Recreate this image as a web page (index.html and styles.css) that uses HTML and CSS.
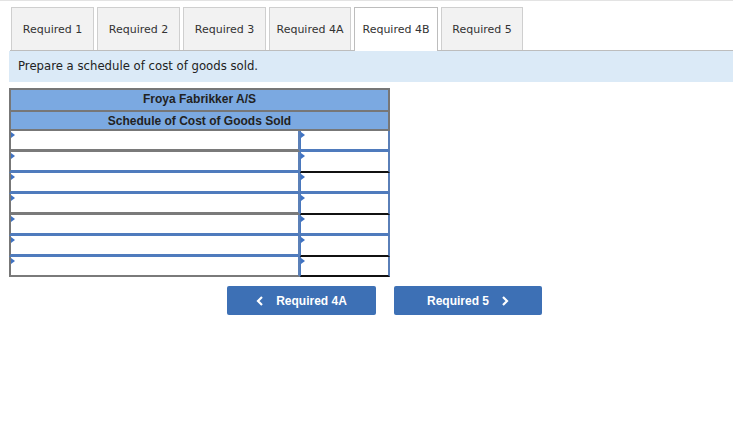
FILE: index.html
```html
<!DOCTYPE html>
<html>
<head>
<meta charset="utf-8">
<link rel="stylesheet" href="styles.css">
</head>
<body>
<div class="top-rule"></div>
<div class="tabs">
  <div class="tab">Required 1</div>
  <div class="tab">Required 2</div>
  <div class="tab">Required 3</div>
  <div class="tab">Required 4A</div>
  <div class="tab active">Required 4B</div>
  <div class="tab">Required 5</div>
</div>
<div class="instruction">Prepare a schedule of cost of goods sold.</div>
<div class="sheet">
  <div class="head h1">Froya Fabrikker A/S</div>
  <div class="head h2">Schedule of Cost of Goods Sold</div>
  <div class="row"><div class="cell left gray-b"></div><div class="cell right"></div></div>
  <div class="row"><div class="cell left"></div><div class="cell right dark-b"></div></div>
  <div class="row"><div class="cell left"></div><div class="cell right"></div></div>
  <div class="row"><div class="cell left gray-b"></div><div class="cell right dark-b"></div></div>
  <div class="row"><div class="cell left"></div><div class="cell right"></div></div>
  <div class="row"><div class="cell left"></div><div class="cell right dark-b"></div></div>
  <div class="row last"><div class="cell left"></div><div class="cell right dark-b"></div></div>
</div>
<div class="nav">
  <button class="btn"><svg class="chev" width="8" height="10" viewBox="0 0 8 10"><polyline points="6,1 2,5 6,9" fill="none" stroke="#fff" stroke-width="2.2"/></svg><span>Required 4A</span></button>
  <button class="btn next"><span>Required 5</span><svg class="chev" width="8" height="10" viewBox="0 0 8 10"><polyline points="2,1 6,5 2,9" fill="none" stroke="#fff" stroke-width="2.2"/></svg></button>
</div>
</body>
</html>
```
FILE: styles.css
```css
html, body {
  margin: 0;
  padding: 0;
  background: #fff;
}
body {
  width: 733px;
  height: 436px;
  overflow: hidden;
  font-family: "DejaVu Sans", Verdana, sans-serif;
  color: #222;
}
.top-rule {
  height: 1px;
  background: #e3e3e3;
}
.tabs {
  display: flex;
  gap: 3px;
  margin-top: 6px;
  margin-left: 10px;
  padding-left: 1px;
  border-bottom: 1px solid #bdbdbd;
  height: 43px;
}
.tab {
  box-sizing: border-box;
  width: 83px;
  height: 43px;
  padding: 0 4px;
  border: 1px solid #cfcfcf;
  border-bottom: none;
  background: #f2f2f2;
  font-size: 11px;
  line-height: 43px;
  text-align: center;
  color: #333;
  white-space: nowrap;
}
.tab:nth-child(4) {
  width: 82px;
}
.tab.active {
  background: #fff;
  border-color: #bdbdbd;
  height: 44px;
  width: 84px;
}
.tab:last-child {
  width: 82px;
}
.instruction {
  margin-left: 9px;
  height: 31px;
  line-height: 31px;
  padding-left: 9px;
  background: #dbeaf7;
  font-size: 11.7px;
  color: #222;
}
.sheet {
  margin-top: 6px;
  margin-left: 9px;
  width: 381px;
  box-sizing: border-box;
  font-family: "Liberation Sans", Arial, sans-serif;
}
.head {
  box-sizing: border-box;
  background: #7ba9e1;
  border: 2px solid #777;
  border-bottom: none;
  text-align: center;
  font-size: 12px;
  font-weight: bold;
  color: #222;
}
.h1 {
  height: 22px;
  line-height: 19px;
}
.h2 {
  height: 21px;
  line-height: 19px;
  border-bottom: 2px solid #777;
}
.row {
  display: flex;
  height: 21px;
}
.row.last {
  height: 20px;
}
.cell {
  position: relative;
  box-sizing: border-box;
  height: 100%;
  background: #fff;
}
.cell::before {
  content: "";
  position: absolute;
  left: 0;
  top: 1px;
  border-left: 4px solid #3f72c2;
  border-top: 3px solid transparent;
  border-bottom: 3px solid transparent;
}
.left {
  width: 291px;
  border-left: 2px solid #777;
  border-right: 2px solid #5b80b8;
  border-bottom: 3px solid #4f7bbd;
}
.right {
  width: 90px;
  border-right: 2px solid #5a7fb8;
  border-left: 1px solid #4a78bd;
  border-bottom: 3px solid #4f7bbd;
}
.left.gray-b {
  border-bottom-color: #7a7a7a;
}
.right.dark-b {
  border-bottom: 2px solid #111;
}
.row.last .left {
  border-bottom: 2px solid #7a7a7a;
}
.nav {
  display: flex;
  gap: 18px;
  margin-top: 9px;
  margin-left: 227px;
}
.btn {
  display: flex;
  align-items: center;
  justify-content: center;
  gap: 12px;
  width: 149px;
  height: 29px;
  border: none;
  border-radius: 2px;
  background: #3d70b5;
  color: #fff;
  font-family: "Liberation Sans", Arial, sans-serif;
  font-weight: bold;
  font-size: 12px;
  padding: 0;
}
.btn.next {
  width: 148px;
}
.chev {
  display: block;
}
```
